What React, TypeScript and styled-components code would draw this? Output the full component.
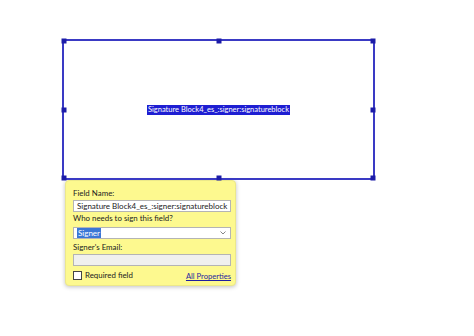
import React from "react";
import styled, { createGlobalStyle } from "styled-components";

const Global = createGlobalStyle`
  html, body { margin: 0; padding: 0; background: #ffffff; }
  body { font-family: Lato, "Noto Sans", sans-serif; }
`;

const Page = styled.div`
  width: 474px;
  height: 336px;
  box-sizing: border-box;
  padding: 39px 0 0 62px;
  display: flex;
  flex-direction: column;
  align-items: flex-start;
`;

const Canvas = styled.div`
  position: relative;
  box-sizing: border-box;
  width: 313px;
  height: 141px;
  border: 2px solid #3a3ac4;
  display: flex;
  align-items: center;
  justify-content: center;
`;

const Handle = styled.span<{ $x: string; $y: string }>`
  position: absolute;
  width: 5px;
  height: 5px;
  background: #1c1ca8;
  left: ${(p) => p.$x};
  top: ${(p) => p.$y};
  transform: translate(-50%, -50%);
`;

const CanvasLabel = styled.span`
  background: #1e1ed2;
  color: #ffffff;
  font-size: 7.5px;
  line-height: 10px;
  padding: 0 1px;
  white-space: nowrap;
  margin-top: 1px;
`;

const Panel = styled.div`
  margin: 0 0 0 3px;
  width: 171px;
  height: 106px;
  box-sizing: border-box;
  padding: 7px 4px 0 7px;
  background: #fdf98f;
  border: 1px solid #ece88a;
  border-radius: 4px;
  box-shadow: 0 1px 4px rgba(0, 0, 0, 0.25);
  display: flex;
  flex-direction: column;
  font-size: 7.9px;
  color: #222222;
`;

const Label = styled.div<{ $mt?: number }>`
  line-height: 11px;
  height: 11px;
  margin-top: ${(p) => p.$mt ?? 0}px;
  white-space: nowrap;
`;

const Field = styled.div<{ $disabled?: boolean; $mt?: number }>`
  box-sizing: border-box;
  height: 12px;
  margin-top: ${(p) => p.$mt ?? 1}px;
  border: 1px solid #b4b4b4;
  background: ${(p) => (p.$disabled ? "#f0f0ee" : "#ffffff")};
  display: flex;
  align-items: center;
  padding: 0 2px 0 3px;
  font-size: 8px;
  line-height: 10px;
  white-space: nowrap;
  overflow: hidden;
`;

const SelectBox = styled(Field)`
  justify-content: space-between;
  padding: 0 4px 0 3px;
`;

const Selected = styled.span`
  background: #3a77d6;
  color: #ffffff;
  padding: 0 1px;
  line-height: 10px;
`;

const Chevron = styled.svg`
  width: 6px;
  height: 4px;
`;

const Row = styled.div`
  margin-top: 3px;
  display: flex;
  align-items: center;
  justify-content: space-between;
  height: 12px;
`;

const Check = styled.label`
  display: flex;
  align-items: center;
  gap: 3px;
  line-height: 11px;
`;

const Box = styled.span`
  width: 9px;
  height: 9px;
  box-sizing: border-box;
  border: 1px solid #444444;
  background: #ffffff;
  display: inline-block;
`;

const Link = styled.a`
  color: #1e1ea0;
  font-size: 7.6px;
  text-decoration: underline;
  line-height: 11px;
  margin-top: 3px;
`;

const handles: [string, string][] = [
  ["0", "0"],
  ["50%", "0"],
  ["100%", "0"],
  ["0", "50%"],
  ["100%", "50%"],
  ["0", "100%"],
  ["50%", "100%"],
  ["100%", "100%"],
];

export default function App() {
  return (
    <>
      <Global />
      <Page>
        <Canvas>
          {handles.map(([x, y], i) => (
            <Handle key={i} $x={x} $y={y} />
          ))}
          <CanvasLabel>Signature Block4_es_:signer:signatureblock</CanvasLabel>
        </Canvas>
        <Panel>
          <Label>Field Name:</Label>
          <Field>Signature Block4_es_:signer:signatureblock</Field>
          <Label $mt={1}>Who needs to sign this field?</Label>
          <SelectBox $mt={3}>
            <Selected>Signer</Selected>
            <Chevron viewBox="0 0 6 4">
              <path d="M0.5 0.5 L3 3 L5.5 0.5" fill="none" stroke="#666" strokeWidth="0.8" />
            </Chevron>
          </SelectBox>
          <Label $mt={3}>Signer's Email:</Label>
          <Field $disabled $mt={1} />
          <Row>
            <Check>
              <Box />
              Required field
            </Check>
            <Link href="#">All Properties</Link>
          </Row>
        </Panel>
      </Page>
    </>
  );
}
